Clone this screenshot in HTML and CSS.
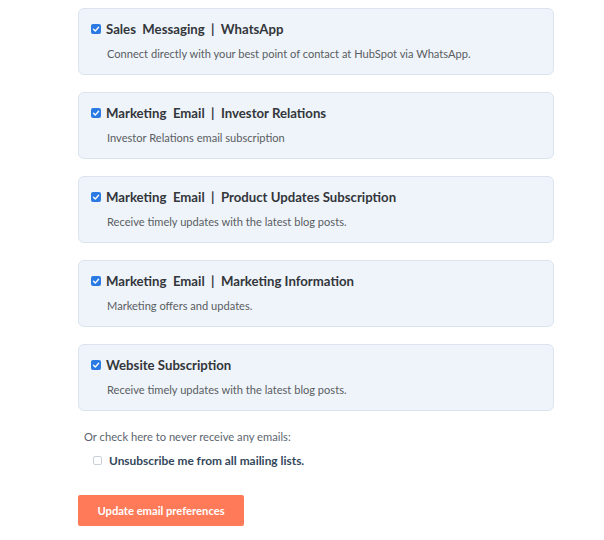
FILE: index.html
```html
<!DOCTYPE html>
<html>
<head>
<meta charset="utf-8">
<link rel="stylesheet" href="styles.css">
</head>
<body>
<div class="page">
  <div class="card">
    <div class="head"><span class="box checked"><svg viewBox="0 0 10 10"><path d="M2.5 5.2 L4.3 7 L7.6 3.2" fill="none" stroke="#fff" stroke-width="1.3" stroke-linecap="round" stroke-linejoin="round"/></svg></span><span class="title">Sales&nbsp; Messaging&nbsp; |&nbsp; WhatsApp</span></div>
    <p class="desc">Connect directly with your best point of contact at HubSpot via WhatsApp.</p>
  </div>
  <div class="card">
    <div class="head"><span class="box checked"><svg viewBox="0 0 10 10"><path d="M2.5 5.2 L4.3 7 L7.6 3.2" fill="none" stroke="#fff" stroke-width="1.3" stroke-linecap="round" stroke-linejoin="round"/></svg></span><span class="title">Marketing&nbsp; Email&nbsp; |&nbsp; Investor Relations</span></div>
    <p class="desc">Investor Relations email subscription</p>
  </div>
  <div class="card">
    <div class="head"><span class="box checked"><svg viewBox="0 0 10 10"><path d="M2.5 5.2 L4.3 7 L7.6 3.2" fill="none" stroke="#fff" stroke-width="1.3" stroke-linecap="round" stroke-linejoin="round"/></svg></span><span class="title">Marketing&nbsp; Email&nbsp; |&nbsp; Product Updates Subscription</span></div>
    <p class="desc">Receive timely updates with the latest blog posts.</p>
  </div>
  <div class="card">
    <div class="head"><span class="box checked"><svg viewBox="0 0 10 10"><path d="M2.5 5.2 L4.3 7 L7.6 3.2" fill="none" stroke="#fff" stroke-width="1.3" stroke-linecap="round" stroke-linejoin="round"/></svg></span><span class="title">Marketing&nbsp; Email&nbsp; |&nbsp; Marketing Information</span></div>
    <p class="desc">Marketing offers and updates.</p>
  </div>
  <div class="card">
    <div class="head"><span class="box checked"><svg viewBox="0 0 10 10"><path d="M2.5 5.2 L4.3 7 L7.6 3.2" fill="none" stroke="#fff" stroke-width="1.3" stroke-linecap="round" stroke-linejoin="round"/></svg></span><span class="title">Website Subscription</span></div>
    <p class="desc">Receive timely updates with the latest blog posts.</p>
  </div>
  <p class="or">Or check here to never receive any emails:</p>
  <div class="unsub"><span class="box empty"></span><span class="unsub-label">Unsubscribe me from all mailing lists.</span></div>
  <button class="btn">Update email preferences</button>
</div>
</body>
</html>
```
FILE: styles.css
```css
* { box-sizing: border-box; }
html, body { margin: 0; padding: 0; background: #fff; }
body { font-family: Lato, "Open Sans", sans-serif; }
.page {
  width: 476px;
  margin-left: 78px;
  padding-top: 8px;
  display: flex;
  flex-direction: column;
  align-items: flex-start;
}
.card {
  width: 476px;
  height: 67px;
  background: #eef4fa;
  border: 1px solid #dbe4ee;
  border-radius: 6px;
  padding: 12px 12px 0 12px;
  margin-bottom: 17px;
}
.head {
  display: flex;
  align-items: center;
  height: 16px;
}
.box {
  width: 10px;
  height: 10px;
  border-radius: 2px;
  flex: none;
  display: flex;
}
.box svg { width: 10px; height: 10px; }
.checked { background: #2b7ae4; }
.empty { background: #fff; border: 1px solid #c9d1da; width: 9px; height: 9px; }
.title {
  margin-left: 5px;
  font-size: 13.2px;
  font-weight: 700;
  color: #33363a;
  line-height: 16px;
}
.desc {
  margin: 9px 0 0 16px;
  font-size: 11.1px;
  line-height: 16px;
  color: #5a5d61;
}
.or {
  margin: 1px 0 0 6px;
  font-size: 11.2px;
  line-height: 16px;
  color: #5c6670;
}
.unsub {
  margin: 7px 0 0 15px;
  display: flex;
  align-items: center;
  height: 16px;
}
.unsub-label {
  margin-left: 7px;
  font-size: 11.9px;
  font-weight: 700;
  color: #33475b;
}
.btn {
  margin-top: 27px;
  width: 166px;
  height: 31px;
  background: #ff7a59;
  border: none;
  border-radius: 2px;
  color: #fff;
  font-family: Lato, sans-serif;
  font-size: 11.2px;
  font-weight: 700;
  padding: 0;
}
```
